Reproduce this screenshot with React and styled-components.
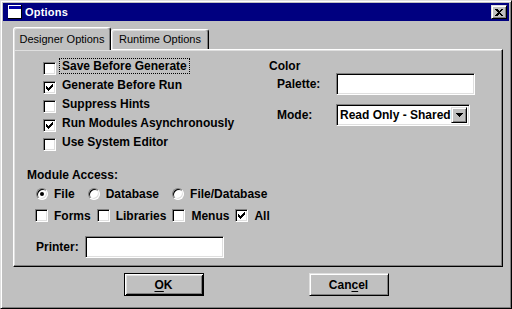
import React from 'react';
import styled, { createGlobalStyle, css } from 'styled-components';

const GlobalStyle = createGlobalStyle`
    html, body {
        margin: 0;
        padding: 0;
        background: #c0c0c0;
    }
    body {
        font-family: "Liberation Sans", Arial, sans-serif;
        color: #000;
    }
`;

const raised = css`
    border: 1px solid;
    border-color: #dfdfdf #000 #000 #dfdfdf;
    box-shadow: inset 1px 1px #fff, inset -1px -1px #808080;
`;

const sunken = css`
    border: 1px solid;
    border-color: #808080 #fff #fff #808080;
    box-shadow: inset 1px 1px #000, inset -1px -1px #dfdfdf;
`;

export default function App() {
    return (
        <>
            <GlobalStyle />
            <Window>
                <TitleBar>
                    <TitleIcon width="16" height="16" viewBox="0 0 16 16">
                        <rect x="2" y="1" width="14" height="14" fill="#c0c0c0" />
                        <rect x="2" y="1" width="14" height="1" fill="#fff" />
                        <rect x="2" y="1" width="1" height="14" fill="#fff" />
                        <rect x="3" y="2" width="12" height="3" fill="#0000a8" />
                        <rect x="3" y="5" width="12" height="9" fill="#fff" />
                        <rect x="2" y="14" width="14" height="1" fill="#000" />
                        <rect x="15" y="1" width="1" height="14" fill="#000" />
                    </TitleIcon>
                    <Title>Options</Title>
                    <CloseButton>
                        <svg width="8" height="7" viewBox="0 0 8 7" shapeRendering="crispEdges">
                            <path d="M0 0h2l2 2 2-2h2L5 3.5 8 7H6L4 5 2 7H0l3-3.5z" fill="#000" />
                        </svg>
                    </CloseButton>
                </TitleBar>

                <TabArea>
                    <TabStrip>
                        <Tab $active>Designer Options</Tab>
                        <Tab>Runtime Options</Tab>
                    </TabStrip>
                    <Panel>
                        <TopGrid>
                            <OptionList>
                                {generalOptions.map((item, index) => (
                                    <OptionRow key={item.label}>
                                        <CheckBox $offset={3}>
                                            {item.checked && <CheckMark />}
                                        </CheckBox>
                                        <OptionLabel $focused={index === 0}>
                                            {item.label}
                                        </OptionLabel>
                                    </OptionRow>
                                ))}
                            </OptionList>
                            <ColorGroup>
                                <GroupHeading>Color</GroupHeading>
                                <FieldRow>
                                    <FieldLabel $width={59}>Palette:</FieldLabel>
                                    <Field $width={139} />
                                </FieldRow>
                                <FieldRow $gap={9}>
                                    <FieldLabel $width={59}>Mode:</FieldLabel>
                                    <Select>
                                        <SelectText>Read Only - Shared</SelectText>
                                        <DropButton>
                                            <svg width="7" height="4" viewBox="0 0 7 4" shapeRendering="crispEdges">
                                                <path d="M0 0h7L3.5 4z" fill="#000" />
                                            </svg>
                                        </DropButton>
                                    </Select>
                                </FieldRow>
                            </ColorGroup>
                        </TopGrid>

                        <SectionHeading>Module Access:</SectionHeading>
                        <ChoiceRow $indent={9} $top={2}>
                            {accessModes.map((mode) => (
                                <Choice key={mode.label} $gap={13}>
                                    <Radio>{mode.selected && <RadioDot />}</Radio>
                                    <ChoiceText>{mode.label}</ChoiceText>
                                </Choice>
                            ))}
                        </ChoiceRow>
                        <ChoiceRow $indent={8} $top={3}>
                            {moduleTypes.map((type) => (
                                <Choice key={type.label} $gap={6}>
                                    <CheckBox>{type.checked && <CheckMark />}</CheckBox>
                                    <ChoiceText>{type.label}</ChoiceText>
                                </Choice>
                            ))}
                        </ChoiceRow>
                        <PrinterRow>
                            <FieldLabel $width={49}>Printer:</FieldLabel>
                            <Field $width={139} />
                        </PrinterRow>
                    </Panel>
                </TabArea>

                <ButtonRow>
                    <PushButton $default>
                        <u>O</u>K
                    </PushButton>
                    <PushButton>
                        Can<u>c</u>el
                    </PushButton>
                </ButtonRow>
            </Window>
        </>
    );
}

function CheckMark() {
    return (
        <svg width="7" height="7" viewBox="0 0 7 7" shapeRendering="crispEdges">
            <path
                d="M6 0h1v3h-1v1h-1v1h-1v1h-1v1h-1v-1h-1v-1h-1v-3h1v1h1v1h1v-1h1v-1h1z"
                fill="#000"
            />
        </svg>
    );
}

const generalOptions = [
    { label: 'Save Before Generate', checked: false },
    { label: 'Generate Before Run', checked: true },
    { label: 'Suppress Hints', checked: false },
    { label: 'Run Modules Asynchronously', checked: true },
    { label: 'Use System Editor', checked: false },
];

const accessModes = [
    { label: 'File', selected: true },
    { label: 'Database', selected: false },
    { label: 'File/Database', selected: false },
];

const moduleTypes = [
    { label: 'Forms', checked: false },
    { label: 'Libraries', checked: false },
    { label: 'Menus', checked: false },
    { label: 'All', checked: true },
];

const Window = styled.div`
    width: 512px;
    height: 309px;
    box-sizing: border-box;
    display: flex;
    flex-direction: column;
    padding: 2px;
    background: #c0c0c0;
    ${raised};
`;

const TitleBar = styled.div`
    height: 18px;
    display: flex;
    align-items: center;
    padding: 0 2px 0 3px;
    background: #000080;
    color: #fff;
`;

const TitleIcon = styled.svg`
    flex: none;
    margin-right: 3px;
`;

const Title = styled.span`
    flex: 1;
    font-size: 11px;
    font-weight: 700;
    line-height: 14px;
    letter-spacing: 0.2px;
`;

const CloseButton = styled.div`
    width: 16px;
    height: 14px;
    box-sizing: border-box;
    display: flex;
    align-items: center;
    justify-content: center;
    background: #c0c0c0;
    ${raised};
`;

const TabArea = styled.div`
    display: flex;
    flex-direction: column;
    padding: 6px 6px 0 10px;
`;

const TabStrip = styled.div`
    position: relative;
    z-index: 1;
    height: 22px;
    display: flex;
    align-items: flex-end;
`;

const Tab = styled.div`
    width: 98px;
    height: ${(p) => (p.$active ? 23 : 20)}px;
    margin-bottom: ${(p) => (p.$active ? -1 : 0)}px;
    box-sizing: border-box;
    display: flex;
    justify-content: center;
    padding-top: ${(p) => (p.$active ? 4 : 2)}px;
    font-size: 11px;
    line-height: 14px;
    background: #c0c0c0;
    border: 1px solid;
    border-bottom: none;
    border-color: #fff #000 transparent #fff;
    border-radius: 3px 3px 0 0;
    box-shadow: inset -1px 0 #808080, inset 1px 1px #dfdfdf;
`;

const Panel = styled.div`
    height: 218px;
    box-sizing: border-box;
    display: flex;
    flex-direction: column;
    padding: 9px 0 0 13px;
    border: 1px solid;
    border-color: #fff #000 #000 #fff;
    box-shadow: inset -1px -1px #808080, inset 1px 1px #dfdfdf;
`;

const TopGrid = styled.div`
    display: grid;
    grid-template-columns: 225px auto;
    margin-left: 16px;
`;

const OptionList = styled.div`
    display: flex;
    flex-direction: column;
`;

const OptionRow = styled.div`
    height: 19px;
    display: flex;
    align-items: flex-start;
    gap: 4px;
`;

const CheckBox = styled.span`
    width: 13px;
    height: 13px;
    flex: none;
    box-sizing: border-box;
    display: flex;
    align-items: center;
    justify-content: center;
    margin-top: ${(p) => p.$offset || 0}px;
    background: #fff;
    ${sunken};
`;

const OptionLabel = styled.span`
    height: 14px;
    padding: 0 2px;
    font-size: 12px;
    font-weight: 700;
    line-height: 14px;
    white-space: nowrap;
    outline: ${(p) => (p.$focused ? '1px dotted #000' : 'none')};
    outline-offset: 0;
`;

const ColorGroup = styled.div`
    display: flex;
    flex-direction: column;
`;

const GroupHeading = styled.div`
    height: 14px;
    padding-left: 1px;
    font-size: 12px;
    font-weight: 700;
    line-height: 14px;
`;

const FieldRow = styled.div`
    display: flex;
    align-items: center;
    padding-left: 9px;
    margin-top: ${(p) => p.$gap || 0}px;
`;

const FieldLabel = styled.span`
    width: ${(p) => p.$width}px;
    flex: none;
    font-size: 12px;
    font-weight: 700;
    line-height: 14px;
`;

const Field = styled.div`
    width: ${(p) => p.$width}px;
    height: 22px;
    box-sizing: border-box;
    background: #fff;
    ${sunken};
`;

const Select = styled.div`
    width: 134px;
    height: 22px;
    box-sizing: border-box;
    display: flex;
    align-items: center;
    padding: 2px;
    background: #fff;
    ${sunken};
`;

const SelectText = styled.span`
    flex: 1;
    padding-left: 1px;
    font-size: 12px;
    font-weight: 700;
    line-height: 14px;
    white-space: nowrap;
`;

const DropButton = styled.span`
    width: 16px;
    height: 16px;
    box-sizing: border-box;
    display: flex;
    align-items: center;
    justify-content: center;
    background: #c0c0c0;
    ${raised};
`;

const SectionHeading = styled.div`
    margin-top: 14px;
    height: 14px;
    font-size: 12px;
    font-weight: 700;
    line-height: 14px;
`;

const ChoiceRow = styled.div`
    height: 19px;
    display: flex;
    align-items: center;
    padding-left: ${(p) => p.$indent}px;
    margin-top: ${(p) => p.$top}px;
`;

const Choice = styled.div`
    display: flex;
    align-items: center;
    gap: 6px;
    margin-right: ${(p) => p.$gap}px;
`;

const Radio = styled.span`
    width: 12px;
    height: 12px;
    flex: none;
    box-sizing: border-box;
    border-radius: 50%;
    display: flex;
    align-items: center;
    justify-content: center;
    background: #fff;
    ${sunken};
`;

const RadioDot = styled.span`
    width: 4px;
    height: 4px;
    border-radius: 50%;
    background: #000;
`;

const ChoiceText = styled.span`
    font-size: 12px;
    font-weight: 700;
    line-height: 14px;
    white-space: nowrap;
`;

const PrinterRow = styled.div`
    display: flex;
    align-items: center;
    margin-top: 11px;
    padding-left: 9px;
`;

const ButtonRow = styled.div`
    display: flex;
    justify-content: center;
    gap: 105px;
    margin-top: 6px;
`;

const PushButton = styled.div`
    width: 80px;
    height: 23px;
    box-sizing: border-box;
    display: flex;
    align-items: center;
    justify-content: center;
    font-size: 12px;
    font-weight: 700;
    line-height: 14px;
    background: #c0c0c0;
    ${(p) =>
        p.$default
            ? css`
                  border: 1px solid #000;
                  box-shadow: inset 1px 1px #fff, inset -1px -1px #000,
                      inset 2px 2px #dfdfdf, inset -2px -2px #808080;
              `
            : raised};
    u {
        text-underline-offset: 2px;
    }
`;
